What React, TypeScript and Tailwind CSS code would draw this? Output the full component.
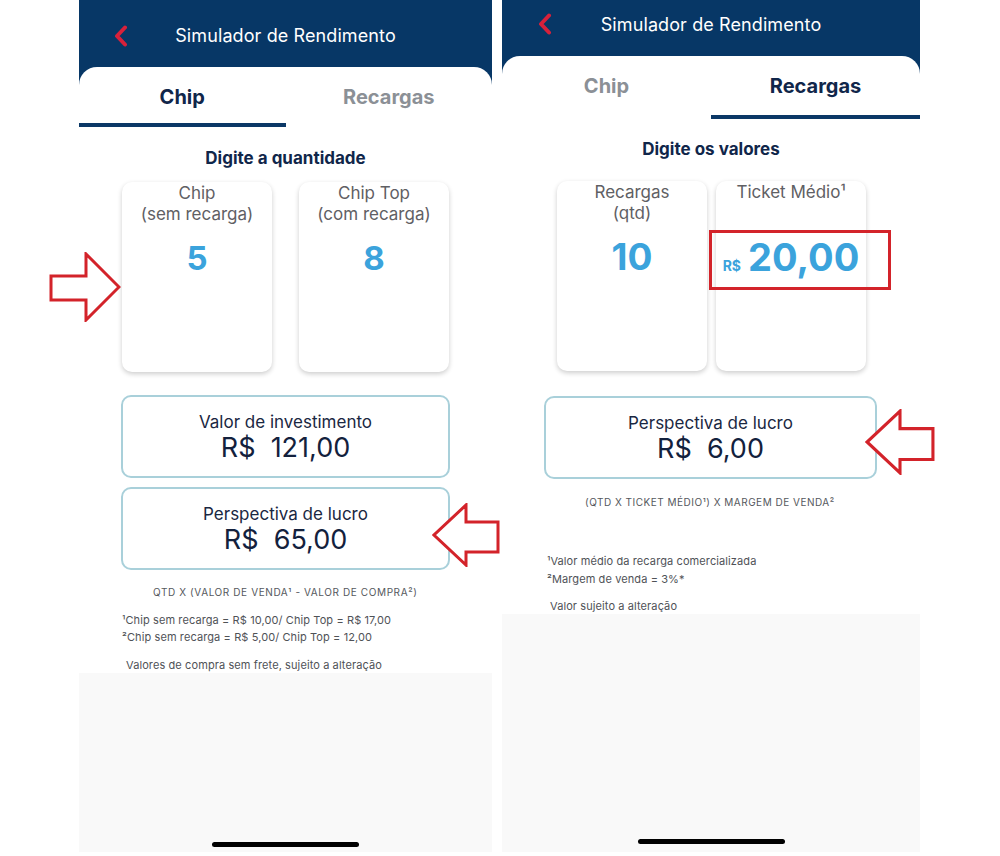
import React from 'react';

const font = { fontFamily: 'Inter, "Noto Sans", sans-serif' };

function BackChevron() {
    return (
        <svg width="16" height="22" viewBox="0 0 16 22" className="shrink-0">
            <polyline points="12,2.5 4,11 12,19.5" fill="none" stroke="#d7213b" strokeWidth="4" strokeLinecap="round" strokeLinejoin="round" />
        </svg>
    );
}

function Header({ height, pad, chevronLeft }: { height: string; pad: string; chevronLeft: string }) {
    return (
        <div className={`relative flex items-center justify-center ${height} ${pad}`}>
            <div className={`absolute ${chevronLeft}`}>
                <BackChevron />
            </div>
            <span className="text-[18px] text-white tracking-[0.1px]">Simulador de Rendimento</span>
        </div>
    );
}

function Tabs({ active, height, pad = '' }: { active: 'chip' | 'recargas'; height: string; pad?: string }) {
    return (
        <div className={`flex ${height}`}>
            {(['chip', 'recargas'] as const).map((t) => {
                const on = t === active;
                return (
                    <div key={t} className="flex-1 flex flex-col">
                        <div
                            className={`flex-1 flex items-center justify-center text-[20px] font-bold ${pad} ${
                                on ? 'text-[#10264a]' : 'text-[#8b9096]'
                            }`}
                        >
                            {t === 'chip' ? 'Chip' : 'Recargas'}
                        </div>
                        <div className={`h-[4px] ${on ? 'bg-[#0b3866]' : 'bg-transparent'}`} />
                    </div>
                );
            })}
        </div>
    );
}

function InputCard({ lines, children }: { lines: string[]; children: React.ReactNode }) {
    return (
        <div className="w-[150px] h-[190px] bg-white rounded-[10px] shadow-[0_2px_5px_rgba(0,0,0,0.2)] flex flex-col items-center pt-[1px]">
            {lines.map((l) => (
                <div key={l} className="text-[17px] leading-[21px] text-[#5f6064]">
                    {l}
                </div>
            ))}
            {lines.length === 1 && <div className="h-[21px]" />}
            {children}
        </div>
    );
}

function ResultBox({ label, value, width, className = '' }: { label: string; value: string; width: string; className?: string }) {
    return (
        <div className={`${width} h-[83px] border-2 border-[#a9d0da] rounded-[10px] flex flex-col items-center pt-[14px] ${className}`}>
            <div className="text-[17px] leading-[22px] text-[#1a2742]">{label}</div>
            <div className="text-[27px] leading-[30px] text-[#13213d] whitespace-pre">{value}</div>
        </div>
    );
}

function HomeBar() {
    return <div className="w-[147px] h-[5px] rounded-full bg-black" />;
}

function Arrow({ dir, className }: { dir: 'left' | 'right'; className: string }) {
    const pts = dir === 'right' ? '2,24 37,24 37,2 70,35 37,68 37,48 2,48' : '66,19 34,19 34,2 2,32 34,62 34,49 66,49';
    return (
        <svg className={`absolute ${className}`} viewBox={dir === 'right' ? '0 0 72 70' : '0 0 68 64'}>
            <polygon points={pts} fill="white" stroke="#d3232a" strokeWidth="3" strokeLinejoin="miter" />
        </svg>
    );
}

function ChipScreen() {
    return (
        <div className="w-[413px] h-[852px] bg-[#073766] flex flex-col">
            <Header height="h-[67px]" pad="pt-[4px]" chevronLeft="left-[34px] top-[25px]" />
            <div className="flex-1 bg-white rounded-t-[18px] flex flex-col overflow-hidden">
                <Tabs active="chip" height="h-[60px]" pad="pt-[3px]" />
                <div className="mt-[21px] text-center text-[17px] leading-[20px] font-bold text-[#10264a]">Digite a quantidade</div>
                <div className="mt-[14px] pl-[43px] flex gap-[27px]">
                    <InputCard lines={['Chip', '(sem recarga)']}>
                        <div className="mt-[13px] text-[33px] leading-[40px] font-bold text-[#3ba3dc]">5</div>
                    </InputCard>
                    <InputCard lines={['Chip Top', '(com recarga)']}>
                        <div className="mt-[13px] text-[33px] leading-[40px] font-bold text-[#3ba3dc]">8</div>
                    </InputCard>
                </div>
                <ResultBox className="mt-[23px] ml-[42px]" width="w-[329px]" label="Valor de investimento" value="R$  121,00" />
                <ResultBox className="mt-[9px] ml-[42px]" width="w-[329px]" label="Perspectiva de lucro" value="R$  65,00" />
                <div className="mt-[15px] ml-[74px] text-[10px] leading-[14px] text-[#55585d] tracking-[0.6px]">
                    QTD X (VALOR DE VENDA¹ - VALOR DE COMPRA²)
                </div>
                <div className="mt-[13px] ml-[43px] text-[11px] leading-[17px] text-[#4f5257] tracking-[0.1px]">
                    <div>¹Chip sem recarga = R$ 10,00/ Chip Top = R$ 17,00</div>
                    <div>²Chip sem recarga = R$ 5,00/ Chip Top = 12,00</div>
                </div>
                <div className="mt-[11px] ml-[47px] text-[11px] leading-[16px] text-[#4f5257] tracking-[0.1px]">
                    Valores de compra sem frete, sujeito a alteração
                </div>
                <div className="flex-1 bg-[#f9f9f9] flex flex-col justify-end items-center pb-[5px]">
                    <HomeBar />
                </div>
            </div>
        </div>
    );
}

function RecargasScreen() {
    return (
        <div className="w-[418px] h-[852px] bg-[#073766] flex flex-col">
            <Header height="h-[56px]" pad="pb-[8px]" chevronLeft="left-[35px] top-[13px]" />
            <div className="flex-1 bg-white rounded-t-[18px] flex flex-col">
                <Tabs active="recargas" height="h-[63px]" />
                <div className="mt-[20px] text-center text-[17px] leading-[20px] font-bold text-[#10264a]">Digite os valores</div>
                <div className="mt-[22px] pl-[55px] flex gap-[9px]">
                    <InputCard lines={['Recargas', '(qtd)']}>
                        <div className="mt-[12px] text-[37px] leading-[42px] font-bold text-[#3ba3dc]">10</div>
                    </InputCard>
                    <div className="relative">
                        <InputCard lines={['Ticket Médio¹']}>
                            <div className="mt-[12px] flex items-baseline gap-[7px] text-[#3ba3dc] font-bold">
                                <span className="text-[14px]">R$</span>
                                <span className="text-[38px] leading-[42px]">20,00</span>
                            </div>
                        </InputCard>
                        <div className="absolute left-[-7px] top-[49px] w-[182px] h-[60px] border-[3px] border-[#d3232a]" />
                    </div>
                </div>
                <ResultBox className="mt-[25px] ml-[42px]" width="w-[333px]" label="Perspectiva de lucro" value="R$  6,00" />
                <div className="mt-[16px] ml-[83px] text-[10px] leading-[14px] text-[#55585d] tracking-[0.5px]">
                    (QTD X TICKET MÉDIO¹) X MARGEM DE VENDA²
                </div>
                <div className="mt-[43px] ml-[45px] text-[11px] leading-[18px] text-[#4f5257] tracking-[0.1px]">
                    <div>¹Valor médio da recarga comercializada</div>
                    <div>²Margem de venda = 3%*</div>
                </div>
                <div className="mt-[10px] ml-[48px] text-[11px] leading-[16px] text-[#4f5257] tracking-[0.1px]">Valor sujeito a alteração</div>
                <div className="flex-1 bg-[#f9f9f9] flex flex-col justify-end items-center pb-[8px]">
                    <HomeBar />
                </div>
            </div>
        </div>
    );
}

export default function App() {
    return (
        <div className="relative w-[1000px] h-[856px] bg-white overflow-hidden" style={font}>
            <div className="flex gap-[10px] pl-[79px]">
                <ChipScreen />
                <RecargasScreen />
            </div>
            <Arrow dir="right" className="left-[49px] top-[252px] w-[72px] h-[70px]" />
            <Arrow dir="left" className="left-[432px] top-[503px] w-[68px] h-[64px]" />
            <Arrow dir="left" className="left-[865px] top-[409px] w-[70px] h-[66px]" />
        </div>
    );
}
